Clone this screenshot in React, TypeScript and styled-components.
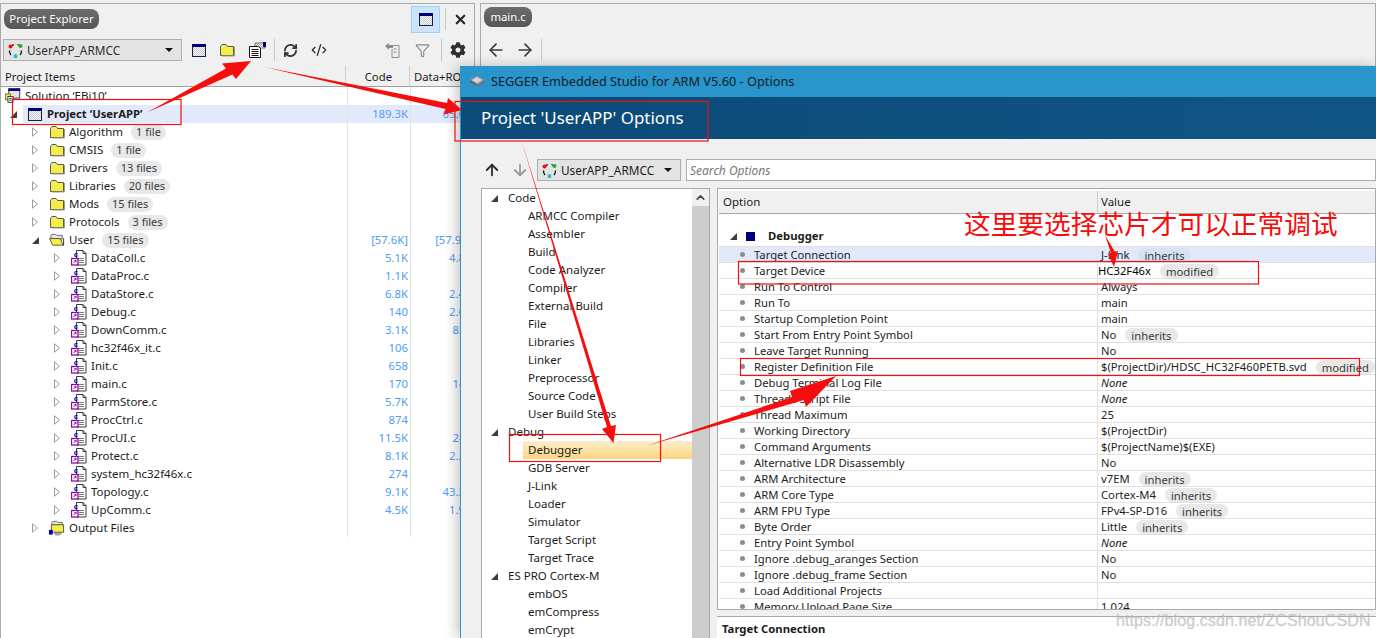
import React from "react";
import styled, { createGlobalStyle } from "styled-components";
import { ArrowDown, ArrowLeft, ArrowRight, ArrowUp, ChevronUp, CodeXml, Funnel, RefreshCw, X } from "lucide-react";
import { FaCog } from "react-icons/fa";

const Global = createGlobalStyle`
  html, body { margin: 0; padding: 0; background: #f0f0f0; }
  * { box-sizing: border-box; }
`;

const Shell = styled.div`
  position: relative; width: 1376px; height: 638px; overflow: hidden; display: flex; gap: 5px;
  padding-top: 3px; background: #f0f0f0; color: #1c1c1c;
  font-family: "Noto Sans", "Open Sans", sans-serif; font-size: 11.3px; line-height: 16px;
`;
const Explorer = styled.section`
  width: 475px; flex: none; display: flex; flex-direction: column;
  border: 1px solid #a9a9a9; border-bottom: 0;
`;
const Editor = styled.section`
  flex: 1; display: flex; flex-direction: column; border: 1px solid #a9a9a9; border-bottom: 0;
`;
const TitleRow = styled.div`
  height: 30px; display: flex; align-items: center; padding: 0 0 0 3px; flex: none;
`;
const EditorTitleRow = styled(TitleRow)`
  align-items: flex-start; padding-top: 3px;
`;
const Pill = styled.div<{ $w: number }>`
  width: ${(p) => p.$w}px; height: 20px; border-radius: 8px; color: #fff; text-align: center;
  background: linear-gradient(#6c6c6c, #565656); line-height: 19px; font-size: 11.3px;
`;
const Spacer = styled.div`flex: 1;`;
const ActiveBtn = styled.div`
  width: 29px; height: 27px; border: 1px solid #99d1ff; background: #cce4f7;
  display: flex; align-items: center; justify-content: center; margin-right: 5px;
`;
const VSep = styled.div<{ $h?: number; $m?: string }>`
  width: 1px; height: ${(p) => p.$h ?? 22}px; background: #c8c8c8; margin: ${(p) => p.$m ?? "0"}; flex: none;
`;
const CloseBox = styled.div`
  width: 28px; display: flex; justify-content: center; color: #262626;
`;
const ToolRow = styled.div`
  height: 32px; flex: none; display: flex; align-items: center; padding-left: 2px; color: #303030;
`;
const Combo = styled.div<{ $w: number }>`
  width: ${(p) => p.$w}px; height: 22px; flex: none; display: flex; align-items: center; gap: 4px; padding-left: 4px;
  background: #e3e3e3; border: 1px solid #adadad; font-size: 11.8px; position: relative;
`;
const ComboArrow = styled.i`
  position: absolute; right: 8px; top: 8px; width: 0; height: 0;
  border-left: 4px solid transparent; border-right: 4px solid transparent; border-top: 4px solid #111;
`;
const ToolSlot = styled.div<{ $w: number; $m?: number }>`
  width: ${(p) => p.$w}px; margin-left: ${(p) => p.$m ?? 0}px; flex: none; display: flex; align-items: center; justify-content: center;
`;
const HeadRow = styled.div`
  height: 21px; flex: none; display: grid; grid-template-columns: 345px 64px 1fr; background: #fff;
  border-bottom: 1px solid #a0a0a0;
`;
const HeadCell = styled.div<{ $right?: boolean }>`
  background: #f0f0f0; line-height: 21px; padding: 0 ${(p) => (p.$right ? "17px" : "4px")}; font-size: 11.3px;
  text-align: ${(p) => (p.$right ? "right" : "left")}; border-right: 1px solid #cfcfcf; white-space: nowrap; overflow: hidden;
`;
const ExplorerBody = styled.div`
  flex: 1; background: #fff; overflow: hidden;
`;
const TreeRow = styled.div<{ $sel?: boolean }>`
  height: 18px; display: grid; grid-template-columns: 345px 64px 1fr; align-items: stretch;
  background: ${(p) => (p.$sel ? "linear-gradient(to right, transparent 22px, #e1e9fa 22px)" : "transparent")};
`;
const NameCell = styled.div<{ $indent: number }>`
  display: flex; align-items: center; padding-left: ${(p) => p.$indent}px; font-size: 11.5px; white-space: nowrap;
`;
const Toggle = styled.span`
  width: 22px; flex: none; display: flex; align-items: center; padding-left: 5px;
`;
const IconBox = styled.span`
  width: 16px; height: 16px; flex: none; margin-right: 4px; display: flex; align-items: center; justify-content: center;
`;
const ProjectName = styled.b`font-weight: 700; font-size: 11.3px;`;
const Count = styled.span`
  margin-left: 8px; padding: 0 5px; height: 15px; line-height: 14px; border-radius: 8px; background: #e8e8e8; color: #3a3a3a; font-size: 11px;
`;
const NumCell = styled.div<{ $last?: boolean }>`
  text-align: right; color: #4f9df5; line-height: 18px; padding-right: 2px; font-size: 11.3px; white-space: nowrap;
  border-left: 1px solid #e3e3e3;
  margin-left: ${(p) => (p.$last ? 0 : 1)}px;
`;
const EditorBar = styled.div`
  height: 31px; flex: none; display: flex; align-items: center; padding-left: 2px; color: #3a3a3a;
`;
const EditorStrip = styled.div`
  flex: 1; background: #fff; margin-left: 56px; border-top: 1px solid #dcdcdc;
`;

const Dialog = styled.section`
  position: absolute; left: 460px; top: 66px; right: 0; bottom: 0; display: flex; flex-direction: column;
  background: #f0f0f0; border-left: 1px solid #2a95cb; box-shadow: -4px 0 12px rgba(0, 0, 0, 0.22);
`;
const DialogTitle = styled.div`
  height: 31px; flex: none; background: #2a95cb; display: flex; align-items: center; padding: 0 0 1px 8px; gap: 5px; font-size: 12.75px; color: #0c1f2c;
`;
const DialogHead = styled.div`
  height: 42px; flex: none; padding-left: 20px; background: linear-gradient(90deg, #0c4a78, #0f5584); color: #fff; font-size: 16.9px; line-height: 41px;
`;
const DialogTools = styled.div`
  height: 49px; flex: none; padding: 20px 0 0 20px; display: flex; align-items: flex-start;
`;
const ArrowSlot = styled.div<{ $dim?: boolean }>`
  width: 28px; height: 22px; flex: none; display: flex; align-items: center; padding-left: 2px; color: ${(p) => (p.$dim ? "#9b9b9b" : "#2c2c2c")};
`;
const SearchBox = styled.div`
  flex: 1; margin-left: 5px; height: 22px; background: #fff; border: 1px solid #adadad; padding-left: 3px; line-height: 21px; color: #777; font-style: italic; font-size: 12px;
`;
const Panes = styled.div`
  flex: 1; min-height: 0; display: flex; gap: 7px; padding-left: 20px;
`;
const OptTreePane = styled.div`
  width: 229px; flex: none; border: 1px solid #a9a9a9; border-bottom: 0; background: #fff; display: flex; overflow: hidden;
`;
const OptTree = styled.div`flex: 1; font-size: 11.5px;`;
const OptGroup = styled.div`
  height: 18px; display: flex; align-items: center; padding-left: 9px; gap: 10px; white-space: nowrap; line-height: 18px;
`;
const OptItem = styled.div<{ $sel?: boolean }>`
  height: 18px; margin-left: 41px; padding-left: 5px; line-height: 18px; white-space: nowrap;
  background: ${(p) => (p.$sel ? "linear-gradient(#fdeecb, #fbd57f)" : "transparent")};
`;
const Scroll = styled.div`
  width: 17px; flex: none; background: #f0f0f0; display: flex; flex-direction: column; align-items: center; color: #444;
`;
const ScrollUp = styled.div`height: 17px; display: flex; align-items: center;`;
const ScrollThumb = styled.div`flex: 1; width: 100%; background: #cdcdcd;`;
const RightPane = styled.div`
  flex: 1; min-width: 0; display: flex; flex-direction: column; gap: 6px;
`;
const OptionGrid = styled.div`
  flex: 1; min-height: 0; overflow: hidden; background: #fff; border: 1px solid #a9a9a9; padding-top: 2px; padding-left: 1px;
`;
const OptionHead = styled.div`
  height: 23px; display: grid; grid-template-columns: 378px 1fr; background: #f0f0f0; border-bottom: 1px solid #a8a8a8; font-size: 11.5px; line-height: 21px;
`;
const OptionHeadCell = styled.div`
  padding-left: 4px; & + & { border-left: 1px solid #cfcfcf; padding-left: 3px; }
`;
const GroupRow = styled.div`
  height: 33px; display: flex; align-items: center; padding: 12px 0 0 11px; font-weight: 700; font-size: 11.3px; border-bottom: 1px solid #e0e0e0;
`;
const GroupSquare = styled.i`
  width: 9px; height: 9px; background: #00007f; margin: 0 13px 0 9px; flex: none;
`;
const OptRow = styled.div<{ $hl?: boolean }>`
  height: 16px; display: grid; grid-template-columns: 378px 1fr; font-size: 11.25px; line-height: 15px; box-shadow: inset 0 -1px #e0e0e0;
  background: ${(p) => (p.$hl ? "#e1e9fa" : "transparent")};
`;
const OptName = styled.div`
  display: flex; align-items: center; padding: 0 0 1px 21px; gap: 9px; white-space: nowrap;
`;
const Dot = styled.i`
  width: 5px; height: 5px; border-radius: 50%; background: #8c8c8c; flex: none;
`;
const OptValue = styled.div<{ $shift?: boolean; $italic?: boolean }>`
  display: flex; align-items: center; padding: 0 0 1px ${(p) => (p.$shift ? 0 : 3)}px; border-left: 1px solid #e0e0e0; white-space: nowrap;
  font-style: ${(p) => (p.$italic ? "italic" : "normal")};
  color: ${(p) => (p.$shift ? "#000" : "#1c1c1c")};
`;
const Tag = styled.span<{ $blue?: boolean }>`
  margin-left: 9px; height: 14px; line-height: 15px; padding: 0 6px; border-radius: 7px; font-size: 11.25px; font-style: normal; color: #3a3a3a;
  background: ${(p) => (p.$blue ? "#d5e3f7" : "#e8e8e8")};
`;
const Detail = styled.div`
  height: 22px; flex: none; background: #fff; border-top: 1px solid #a9a9a9; padding: 4px 0 0 5px; font-weight: 700; font-size: 11.3px;
`;

const Overlay = styled.svg`
  position: absolute; left: 0; top: 0; width: 1376px; height: 638px; pointer-events: none;
`;
const Callout = styled.div`
  position: absolute; left: 964px; top: 208px; color: #f60d0d; font-size: 26.7px; line-height: 30px; white-space: nowrap;
  font-family: "Noto Sans CJK SC", sans-serif;
`;
const Watermark = styled.div`
  position: absolute; left: 1116px; top: 611px; color: rgba(190, 190, 190, 0.55); font-size: 16.2px; line-height: 18px; white-space: nowrap;
  font-family: "Liberation Sans", sans-serif; text-shadow: 0 0 1px rgba(170, 170, 170, .5);
`;

const Dither = ({ id, a, b }: { id: string; a: string; b: string }) => (
  <pattern id={id} width="2" height="2" patternUnits="userSpaceOnUse">
    <rect width="2" height="2" fill={a} />
    <rect width="1" height="1" fill={b} />
    <rect x="1" y="1" width="1" height="1" fill={b} />
  </pattern>
);
const WindowIcon = () => (
  <svg width="14" height="13" viewBox="0 0 14 13">
    <defs><Dither id="gd" a="#fff" b="#c4c4c4" /></defs>
    <rect x=".5" y=".5" width="13" height="12" fill="url(#gd)" stroke="#15204e" />
    <rect x="0" y="0" width="14" height="3" fill="#00007f" />
  </svg>
);
const FolderIcon = () => (
  <svg width="16" height="14" viewBox="0 0 16 14">
    <defs><Dither id="yd" a="#fff200" b="#f0e890" /></defs>
    <path d="M1.500 12.500V3.500L3 1.500h4l1.500 2H14.500V12.500Z" fill="url(#yd)" stroke="#5c5c3c" />
    <path d="M2 3.500H8" stroke="#e8e0b0" />
    <path d="M15.500 4V13H3" fill="none" stroke="#9c9c9c" />
  </svg>
);
const OpenFolderIcon = () => (
  <svg width="17" height="14" viewBox="0 0 17 14">
    <defs><Dither id="yd2" a="#fff200" b="#f0e890" /></defs>
    <path d="M2 4V2l1-1h4l1 1h6v4H2Z" fill="#e4e4e4" stroke="#666" />
    <path d="M.5 5.500H12l3 7H4Z" fill="url(#yd2)" stroke="#55553a" />
    <path d="M15.500 5V13" stroke="#333" />
  </svg>
);
const OutputIcon = () => (
  <svg width="17" height="16" viewBox="0 0 17 16">
    <defs><Dither id="yd3" a="#fff200" b="#f0e890" /></defs>
    <path d="M3 3V2l1-1h4l1 1h5v3H3Z" fill="#e4e4e4" stroke="#666" />
    <path d="M2.500 4.500H15.500V12.500H2.500Z" fill="url(#yd3)" stroke="#55553a" />
    <rect x="0" y="10" width="4" height="5" fill="#0000c8" />
    <path d="M6 13.500h7.500L11 15.500H7Z" fill="#bdbdbd" stroke="#666" strokeWidth=".6" />
  </svg>
);
const FileIcon = () => (
  <svg width="16" height="16" viewBox="0 0 16 16">
    <path d="M5.500 .5h6.500l3 3v11.500H5.500Z" fill="#fff" stroke="#3a3a3a" />
    <path d="M12 .5v3h3" fill="none" stroke="#3a3a3a" />
    <path d="M7 8.500h6M8 10.500h5M8 12.500h5" stroke="#7a7a7a" />
    <text x="2.800" y="6.800" fontSize="8" fontWeight="700" fill="#0000c8" fontFamily="Liberation Sans">c</text>
    <rect x=".5" y="8.500" width="6.500" height="6.500" fill="#fff" stroke="#8a0a9a" strokeWidth="1.300" />
    <path d="M2.500 13l2.500-2.500M3.500 10.500H5V12" fill="none" stroke="#8a0a9a" />
  </svg>
);
const SolutionIcon = () => (
  <svg width="19" height="18" viewBox="0 0 19 18">
    <defs><Dither id="gd3" a="#fff" b="#c4c4c4" /></defs>
    <rect x="4.500" y=".5" width="13" height="11" fill="url(#gd3)" stroke="#15204e" />
    <rect x="4" y="0" width="14" height="3" fill="#00007f" />
    <rect x=".5" y="6.500" width="6" height="7" fill="#eee35a" stroke="#6a6a30" />
    <rect x="3.500" y="9.500" width="6" height="7" fill="#fff" stroke="#222" />
    <path d="M5 12h3M5 14h3" stroke="#222" />
  </svg>
);
const PropsIcon = () => (
  <svg width="18" height="16" viewBox="0 0 18 16">
    <defs><Dither id="gd4" a="#fff" b="#a8a8a8" /></defs>
    <path d="M6 3V1h10v5H6Z" fill="url(#gd4)" stroke="#777" />
    <rect x="14" y="0" width="3" height="5" fill="#00007f" />
    <path d="M.5 4.500h9l2 2v9H.5Z" fill="#fff" stroke="#111" />
    <path d="M2.500 7.500h7M2.500 9.500h7M2.500 11.500h7M2.500 13.500h7" stroke="#111" />
  </svg>
);
const ConfigIcon = () => (
  <svg width="15" height="15" viewBox="0 0 15 15">
    <path d="M3 3.500A6 6 0 0 1 6 1.500M9.500 1.500A6 6 0 0 1 12 3M13.500 7.500A6 6 0 0 1 12 12M9 13.700A6 6 0 0 1 6 13.700M3 12A6 6 0 0 1 1.500 7.500" fill="none" stroke="#111" strokeWidth="1.300" />
    <circle cx="2.500" cy="3.500" r="2" fill="#e81010" />
    <circle cx="12.500" cy="3" r="2" fill="#22b020" />
    <circle cx="7.500" cy="13" r="2" fill="#18c8d8" />
  </svg>
);
const ChipIcon = () => (
  <svg width="17" height="12" viewBox="0 0 17 12">
    <path d="M8 1l8 4-7 5-8-5Z" fill="#9a9a9a" />
    <path d="M8 2l5 3-5 3-5-3Z" fill="#d5d5d5" />
    <path d="M1 5v2l8 4 7-5V5l-7 5Z" fill="#5c5c5c" />
  </svg>
);
const TriOpen = () => (
  <svg width="7" height="7" viewBox="0 0 7 7"><path d="M0 7L7 0V7Z" fill="#3c3c3c" /></svg>
);
const TriClosed = () => (
  <svg width="6" height="10" viewBox="0 0 6 10"><path d="M.5 .8L5.400 5 .5 9.200Z" fill="#fff" stroke="#9a9a9a" /></svg>
);

type Node = { name: string; level: number; kind: "sol" | "proj" | "folder" | "open" | "output" | "file"; count?: string; code?: string; data?: string; open?: boolean };
const files: [string, string, string][] = [
  ["DataColl.c", "5.1K", "4.8K"], ["DataProc.c", "1.1K", "12"], ["DataStore.c", "6.8K", "2.4K"], ["Debug.c", "140", "2.6K"],
  ["DownComm.c", "3.1K", "836"], ["hc32f46x_it.c", "106", ""], ["Init.c", "658", ""], ["main.c", "170", "148"],
  ["ParmStore.c", "5.7K", ""], ["ProcCtrl.c", "874", ""], ["ProcUI.c", "11.5K", "248"], ["Protect.c", "8.1K", "2.2K"],
  ["system_hc32f46x.c", "274", ""], ["Topology.c", "9.1K", "43.2K"], ["UpComm.c", "4.5K", "1.9K"],
];
const nodes: Node[] = [
  { name: "Solution ‘EBi10’", level: 0, kind: "sol" },
  { name: "Project ‘UserAPP’", level: 1, kind: "proj", code: "189.3K", data: "65.6K", open: true },
  { name: "Algorithm", level: 2, kind: "folder", count: "1 file" },
  { name: "CMSIS", level: 2, kind: "folder", count: "1 file" },
  { name: "Drivers", level: 2, kind: "folder", count: "13 files" },
  { name: "Libraries", level: 2, kind: "folder", count: "20 files" },
  { name: "Mods", level: 2, kind: "folder", count: "15 files" },
  { name: "Protocols", level: 2, kind: "folder", count: "3 files" },
  { name: "User", level: 2, kind: "open", count: "15 files", code: "[57.6K]", data: "[57.9K]", open: true },
  ...files.map(([name, code, data]): Node => ({ name, level: 3, kind: "file", code, data })),
  { name: "Output Files", level: 2, kind: "output" },
];
const nodeIcon = (k: Node["kind"]) =>
  k === "proj" ? <WindowIcon /> : k === "folder" ? <FolderIcon /> : k === "open" ? <OpenFolderIcon /> : k === "output" ? <OutputIcon /> : k === "file" ? <FileIcon /> : <SolutionIcon />;

const optTree: { group: string; items: string[] }[] = [
  { group: "Code", items: ["ARMCC Compiler", "Assembler", "Build", "Code Analyzer", "Compiler", "External Build", "File", "Libraries", "Linker", "Preprocessor", "Source Code", "User Build Steps"] },
  { group: "Debug", items: ["Debugger", "GDB Server", "J-Link", "Loader", "Simulator", "Target Script", "Target Trace"] },
  { group: "ES PRO Cortex-M", items: ["embOS", "emCompress", "emCrypt"] },
];
type Opt = { name: string; value: string; tag?: string; italic?: boolean; shift?: boolean; hl?: boolean };
const options: Opt[] = [
  { name: "Target Connection", value: "J-Link", tag: "inherits", hl: true },
  { name: "Target Device", value: "HC32F46x", tag: "modified", shift: true },
  { name: "Run To Control", value: "Always" },
  { name: "Run To", value: "main" },
  { name: "Startup Completion Point", value: "main" },
  { name: "Start From Entry Point Symbol", value: "No", tag: "inherits" },
  { name: "Leave Target Running", value: "No" },
  { name: "Register Definition File", value: "$(ProjectDir)/HDSC_HC32F460PETB.svd", tag: "modified" },
  { name: "Debug Terminal Log File", value: "None", italic: true },
  { name: "Threads Script File", value: "None", italic: true },
  { name: "Thread Maximum", value: "25" },
  { name: "Working Directory", value: "$(ProjectDir)" },
  { name: "Command Arguments", value: "$(ProjectName)$(EXE)" },
  { name: "Alternative LDR Disassembly", value: "No" },
  { name: "ARM Architecture", value: "v7EM", tag: "inherits" },
  { name: "ARM Core Type", value: "Cortex-M4", tag: "inherits" },
  { name: "ARM FPU Type", value: "FPv4-SP-D16", tag: "inherits" },
  { name: "Byte Order", value: "Little", tag: "inherits" },
  { name: "Entry Point Symbol", value: "None", italic: true },
  { name: "Ignore .debug_aranges Section", value: "No" },
  { name: "Ignore .debug_frame Section", value: "No" },
  { name: "Load Additional Projects", value: "" },
  { name: "Memory Upload Page Size", value: "1,024" },
];

export default function App() {
  return (
    <Shell>
      <Global />
      <Explorer>
        <TitleRow>
          <Pill $w={95}>Project Explorer</Pill>
          <Spacer />
          <ActiveBtn><WindowIcon /></ActiveBtn>
          <VSep $h={22} />
          <CloseBox><X size={15} strokeWidth={3.4} /></CloseBox>
        </TitleRow>
        <ToolRow>
          <Combo $w={179}><ConfigIcon />UserAPP_ARMCC<ComboArrow /></Combo>
          <ToolSlot $w={14} $m={10}><WindowIcon /></ToolSlot>
          <ToolSlot $w={16} $m={13}><FolderIcon /></ToolSlot>
          <ToolSlot $w={18} $m={14}><PropsIcon /></ToolSlot>
          <VSep $m="0 0 0 7px" />
          <ToolSlot $w={18} $m={6}><RefreshCw size={15} strokeWidth={2.8} /></ToolSlot>
          <ToolSlot $w={18} $m={11}><CodeXml size={16} /></ToolSlot>
          <Spacer />
          <ToolSlot $w={18}><svg width="16" height="16" viewBox="0 0 16 16"><path d="M6.500 3.500h8.500v12H8V7" fill="#eee" stroke="#909090" /><path d="M9.500 7h3M9.500 10h3" stroke="#909090" /><path d="M1 4l4-3v2h4v3H5v2Z" fill="#8c8c8c" /></svg></ToolSlot>
          <ToolSlot $w={18} $m={12}><Funnel size={15} color="#888" strokeWidth={1.8} /></ToolSlot>
          <VSep $m="0 0 0 10px" />
          <ToolSlot $w={18} $m={7}><FaCog size={16} /></ToolSlot>
          <ToolSlot $w={7} />
        </ToolRow>
        <HeadRow>
          <HeadCell>Project Items</HeadCell>
          <HeadCell $right>Code</HeadCell>
          <HeadCell>Data+RO</HeadCell>
        </HeadRow>
        <ExplorerBody>
          {nodes.map((n) => (
            <TreeRow key={n.name} $sel={n.kind === "proj"}>
              <NameCell $indent={n.level === 0 ? 4 : 4 + (n.level - 1) * 22}>
                {n.level > 0 && <Toggle>{n.open ? <TriOpen /> : <TriClosed />}</Toggle>}
                <IconBox>{nodeIcon(n.kind)}</IconBox>
                {n.kind === "proj" ? <ProjectName>{n.name}</ProjectName> : n.name}
                {n.count && <Count>{n.count}</Count>}
              </NameCell>
              <NumCell>{n.code}</NumCell>
              <NumCell $last>{n.data}</NumCell>
            </TreeRow>
          ))}
        </ExplorerBody>
      </Explorer>
      <Editor>
        <EditorTitleRow><Pill $w={48}>main.c</Pill></EditorTitleRow>
        <EditorBar>
          <ToolSlot $w={24} $m={1}><ArrowLeft size={20} strokeWidth={2} /></ToolSlot>
          <ToolSlot $w={24} $m={5}><ArrowRight size={20} strokeWidth={2} /></ToolSlot>
          <VSep $m="0 0 0 4px" />
        </EditorBar>
        <EditorStrip />
      </Editor>

      <Dialog>
        <DialogTitle><ChipIcon />SEGGER Embedded Studio for ARM V5.60 - Options</DialogTitle>
        <DialogHead>Project 'UserAPP' Options</DialogHead>
        <DialogTools>
          <ArrowSlot><ArrowUp size={18} strokeWidth={2.4} /></ArrowSlot>
          <ArrowSlot $dim><ArrowDown size={18} strokeWidth={2.4} /></ArrowSlot>
          <Combo $w={144}><ConfigIcon />UserAPP_ARMCC<ComboArrow /></Combo>
          <SearchBox>Search Options</SearchBox>
        </DialogTools>
        <Panes>
          <OptTreePane>
            <OptTree>
              {optTree.map((g) => (
                <React.Fragment key={g.group}>
                  <OptGroup><TriOpen />{g.group}</OptGroup>
                  {g.items.map((it) => <OptItem key={it} $sel={it === "Debugger"}>{it}</OptItem>)}
                </React.Fragment>
              ))}
            </OptTree>
            <Scroll>
              <ScrollUp><ChevronUp size={13} strokeWidth={3} /></ScrollUp>
              <ScrollThumb />
            </Scroll>
          </OptTreePane>
          <RightPane>
            <OptionGrid>
              <OptionHead><OptionHeadCell>Option</OptionHeadCell><OptionHeadCell>Value</OptionHeadCell></OptionHead>
              <GroupRow><TriOpen /><GroupSquare />Debugger</GroupRow>
              {options.map((o) => (
                <OptRow key={o.name} $hl={o.hl}>
                  <OptName><Dot />{o.name}</OptName>
                  <OptValue $shift={o.shift} $italic={o.italic}>
                    {o.value}
                    {o.tag && <Tag $blue={o.hl}>{o.tag}</Tag>}
                  </OptValue>
                </OptRow>
              ))}
            </OptionGrid>
            <Detail>Target Connection</Detail>
          </RightPane>
        </Panes>
      </Dialog>

      <Overlay viewBox="0 0 1376 638">
        <g fill="none" stroke="#f01010" strokeWidth="1.200">
          <rect x="12.500" y="99.500" width="168.500" height="25" />
          <rect x="455" y="101.500" width="253" height="39.500" />
          <rect x="509.500" y="434.500" width="151" height="27" />
          <rect x="738.500" y="261.500" width="520" height="22.500" />
          <rect x="740.500" y="358.500" width="619" height="17" />
        </g>
        <g fill="#f60d0d">
          <path d="M147 112.500L226 68.500L222 63.500L251 61L236 79L232.500 74.500Z" />
          <path d="M264 67L447 103L448 98L462 110L444 114.500L445.500 109Z" />
          <path d="M521 139L607 427L602 429L613.500 443L616 425L611 426Z" />
          <path d="M646 446L792 397L790 391L836 376L806 407L804 400Z" />
          <path d="M1105 235L1111 253L1108 254L1114 267L1118 251L1115 252Z" />
        </g>
      </Overlay>
      <Callout>这里要选择芯片才可以正常调试</Callout>
      <Watermark>https://blog.csdn.net/ZCShouCSDN</Watermark>
    </Shell>
  );
}
